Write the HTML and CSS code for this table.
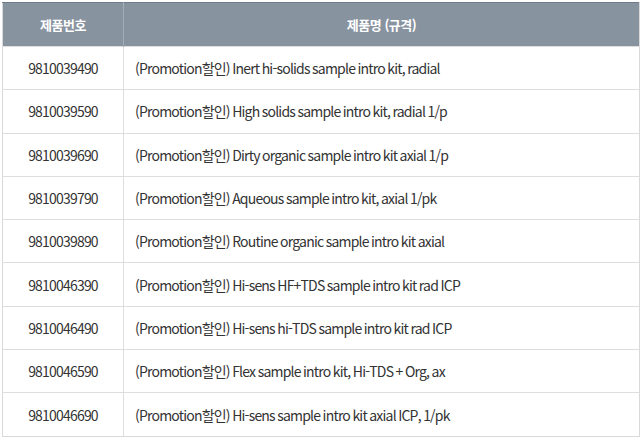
FILE: index.html
```html
<!DOCTYPE html>
<html lang="ko">
<head>
<meta charset="utf-8">
<link rel="stylesheet" href="styles.css">
</head>
<body>
<table class="tbl">
  <colgroup><col class="c1"><col class="c2"></colgroup>
  <thead>
    <tr><th>제품번호</th><th>제품명 (규격)</th></tr>
  </thead>
  <tbody>
    <tr><td class="num">9810039490</td><td class="name">(Promotion할인) Inert hi-solids sample intro kit, radial</td></tr>
    <tr><td class="num">9810039590</td><td class="name">(Promotion할인) High solids sample intro kit, radial 1/p</td></tr>
    <tr><td class="num">9810039690</td><td class="name">(Promotion할인) Dirty organic sample intro kit axial 1/p</td></tr>
    <tr><td class="num">9810039790</td><td class="name">(Promotion할인) Aqueous sample intro kit, axial 1/pk</td></tr>
    <tr><td class="num">9810039890</td><td class="name">(Promotion할인) Routine organic sample intro kit axial</td></tr>
    <tr><td class="num">9810046390</td><td class="name">(Promotion할인) Hi-sens HF+TDS sample intro kit rad ICP</td></tr>
    <tr><td class="num">9810046490</td><td class="name">(Promotion할인) Hi-sens hi-TDS sample intro kit rad ICP</td></tr>
    <tr><td class="num">9810046590</td><td class="name">(Promotion할인) Flex sample intro kit, Hi-TDS + Org, ax</td></tr>
    <tr><td class="num">9810046690</td><td class="name">(Promotion할인) Hi-sens sample intro kit axial ICP, 1/pk</td></tr>
  </tbody>
</table>
</body>
</html>
```
FILE: styles.css
```css
html, body {
  margin: 0;
  padding: 0;
  background: #ffffff;
}
body {
  padding: 2px 0 0 2px;
  font-family: "Noto Sans CJK KR", "Noto Sans", sans-serif;
}
.tbl {
  width: 638px;
  border-collapse: collapse;
  table-layout: fixed;
  border-top: 1px solid #6f7b88;
  border-bottom: 1px solid #d9d9d9;
  border-right: 1px solid #d9d9d9;
  border-left: 1px solid #d9d9d9;
}
.c1 { width: 121px; }
.tbl th {
  background: #8893a0;
  color: #ffffff;
  font-weight: 700;
  font-size: 13px;
  letter-spacing: -0.5px;
  height: 43px;
  padding: 0;
  text-align: center;
  border-left: 1px solid #a3adb8;
}
.tbl th:first-child { border-left: none; }
.tbl td {
  height: 42.3px;
  padding: 0;
  font-size: 14px;
  color: #333333;
  letter-spacing: -0.8px;
  border-top: 1px solid #dedede;
  border-left: 1px solid #dedede;
  vertical-align: middle;
  white-space: nowrap;
}
.tbl td.num {
  text-align: center;
  border-left: none;
}
.tbl td.name {
  padding-left: 11px;
  word-spacing: -0.75px;
}
```
